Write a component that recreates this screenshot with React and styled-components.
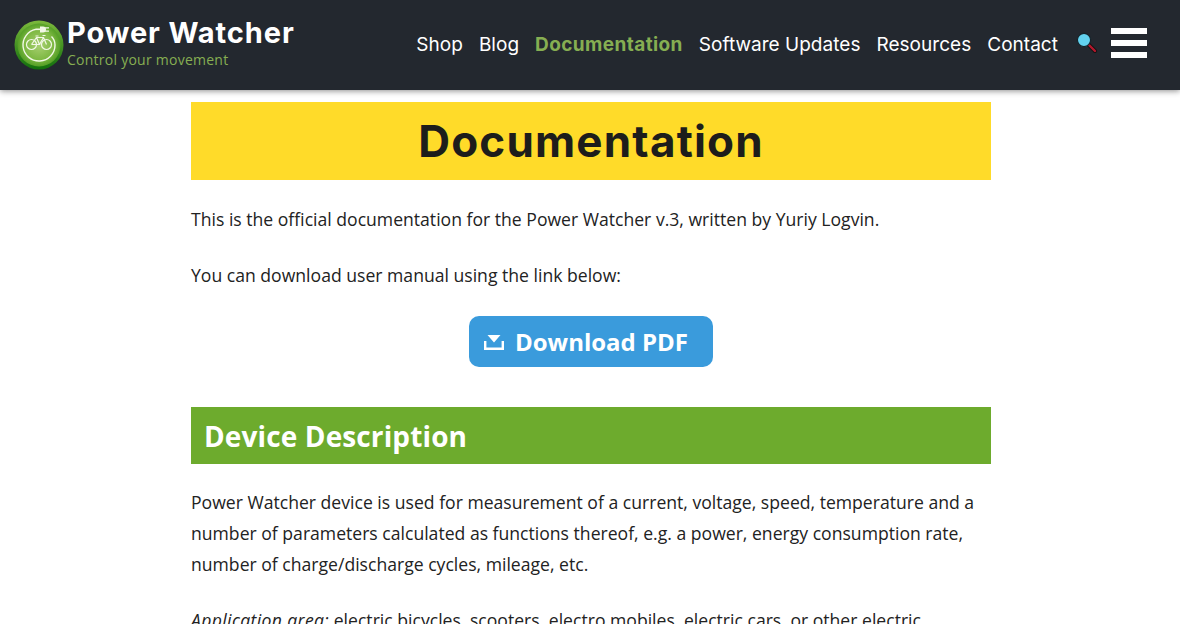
import React from 'react';
import styled, { createGlobalStyle } from 'styled-components';

const GlobalStyle = createGlobalStyle`
  html, body {
    margin: 0;
    padding: 0;
    height: 100%;
    overflow: hidden;
    background: #fff;
    color: #222;
    font-family: "Open Sans", "Liberation Sans", sans-serif;
  }
`;

const Header = styled.header`
  display: flex;
  align-items: center;
  justify-content: space-between;
  height: 90px;
  padding: 0 33px 0 14px;
  background: #23282f;
  box-shadow: 0 1px 6px rgba(0, 0, 0, 0.45);
  position: relative;
  z-index: 2;
`;

const Brand = styled.a`
  display: flex;
  align-items: center;
  gap: 3px;
`;

const BrandText = styled.div`
  display: flex;
  flex-direction: column;
  margin-top: -4px;
`;

const BrandName = styled.div`
  font-family: Inter, "Liberation Sans", sans-serif;
  font-weight: 700;
  font-size: 29px;
  line-height: 34px;
  letter-spacing: 0.9px;
  color: #fff;
`;

const BrandSlogan = styled.div`
  font-size: 14px;
  line-height: 20px;
  letter-spacing: 0.25px;
  color: #86ae52;
`;

const Nav = styled.nav`
  display: flex;
  align-items: center;
  margin-top: -4px;
`;

const NavLink = styled.a`
  font-family: Inter, "Liberation Sans", sans-serif;
  font-size: 19px;
  line-height: 26px;
  margin-right: 16px;
  margin-top: 4px;
  letter-spacing: ${({ $active }) => ($active ? '0.4px' : '0.03px')};
  font-weight: ${({ $active }) => ($active ? 700 : 400)};
  color: ${({ $active }) => ($active ? '#86ae52' : '#fff')};
`;

const SearchButton = styled.span`
  display: flex;
  margin: 0 13px 0 2px;
`;

const Burger = styled.span`
  display: flex;
  flex-direction: column;
  gap: 6px;
  width: 36px;
`;

const BurgerBar = styled.span`
  height: 6px;
  background: #fff;
`;

const Main = styled.main`
  width: 800px;
  margin: 12px auto 0 191px;
`;

const PageTitle = styled.h1`
  margin: 0;
  height: 78px;
  display: flex;
  align-items: center;
  justify-content: center;
  background: #ffdb29;
  color: #1d1d1b;
  font-family: Inter, "Liberation Sans", sans-serif;
  font-size: 44px;
  font-weight: 700;
  letter-spacing: 1.2px;
`;

const Paragraph = styled.p`
  margin: 0 0 25px;
  font-size: 17.6px;
  line-height: 31px;
  color: #222;
`;

const Emphasis = styled.em`
  letter-spacing: 0.37px;
`;

const Intro = styled.div`
  padding-top: 24px;
`;

const ButtonRow = styled.div`
  display: flex;
  justify-content: center;
  margin: 0 0 40px;
`;

const DownloadButton = styled.a`
  display: flex;
  align-items: center;
  gap: 11px;
  height: 51px;
  padding: 0 25px 0 15px;
  border-radius: 10px;
  background: #3a9bdc;
  color: #fff;
  font-size: 24px;
  font-weight: 700;
`;

const SectionTitle = styled.h2`
  margin: 0 0 23px;
  height: 57px;
  display: flex;
  align-items: center;
  padding-left: 13px;
  background: #6dab2d;
  color: #fff;
  font-size: 28px;
  font-weight: 700;
  letter-spacing: 0.12px;
`;

const Logo = () => (
  <svg width="50" height="50" viewBox="0 0 50 50">
    <defs>
      <linearGradient id="logoRim" x1="0" y1="0" x2="0" y2="1">
        <stop offset="0%" stopColor="#7cb93c" />
        <stop offset="100%" stopColor="#116f0c" />
      </linearGradient>
      <radialGradient id="logoFill" cx="50%" cy="50%" r="52%">
        <stop offset="0%" stopColor="#a9d072" />
        <stop offset="65%" stopColor="#7fb944" />
        <stop offset="100%" stopColor="#4f9c22" />
      </radialGradient>
    </defs>
    <circle cx="25" cy="25" r="24.5" fill="url(#logoRim)" />
    <circle cx="25" cy="25" r="21.5" fill="url(#logoFill)" />
    <path d="M22 9.3 A16 16 0 1 0 41 25 Q41 20 37.5 16.5" fill="none" stroke="#f2f8e6" strokeWidth="1.4" />
    <path d="M22 9.3 H26" stroke="#f2f8e6" strokeWidth="1.6" fill="none" />
    <path d="M26 6.5 h3 a3 3 0 0 1 3 3 a3 3 0 0 1 -3 3 h-3 z" fill="#f2f8e6" />
    <path d="M31 7.8 h4 M31 11.2 h4" stroke="#f2f8e6" strokeWidth="1.3" />
    <g fill="none" stroke="#f2f8e6" strokeWidth="1.2">
      <circle cx="17.5" cy="24.5" r="5" />
      <circle cx="32.5" cy="24.5" r="5" />
      <path d="M17.5 24.5 L22.5 17.5 H29.5 L32.5 24.5 M22.5 17.5 L25.5 24.5 H17.5 M25.5 24.5 L29.5 17.5 M21.5 16 H24.5 M28.5 15.5 H31.5" />
    </g>
  </svg>
);

const SearchIcon = () => (
  <svg width="22" height="22" viewBox="0 0 22 22">
    <path d="M12.5 12.5 L19 19" stroke="#111" strokeWidth="4" strokeLinecap="round" />
    <path d="M13 13 L19 19" stroke="#b3182d" strokeWidth="2.4" strokeLinecap="round" />
    <circle cx="8" cy="8" r="6.6" fill="#62d2ef" stroke="#15242b" strokeWidth="1.2" />
  </svg>
);

const DownloadIcon = () => (
  <svg width="20" height="16" viewBox="0 0 20 16" fill="#fff">
    <path d="M0 7 H2.4 V13.6 H17.6 V7 H20 V16 H0 Z" />
    <path d="M3.5 1 H16.5 L10 8.5 Z" />
  </svg>
);

const App = () => {
  return (
    <>
      <GlobalStyle />
      <Header>
        <Brand>
          <Logo />
          <BrandText>
            <BrandName>Power Watcher</BrandName>
            <BrandSlogan>Control your movement</BrandSlogan>
          </BrandText>
        </Brand>
        <Nav>
          <NavLink>Shop</NavLink>
          <NavLink>Blog</NavLink>
          <NavLink $active>Documentation</NavLink>
          <NavLink>Software Updates</NavLink>
          <NavLink>Resources</NavLink>
          <NavLink>Contact</NavLink>
          <SearchButton>
            <SearchIcon />
          </SearchButton>
          <Burger>
            <BurgerBar />
            <BurgerBar />
            <BurgerBar />
          </Burger>
        </Nav>
      </Header>
      <Main>
        <PageTitle>Documentation</PageTitle>
        <Intro>
          <Paragraph>This is the official documentation for the Power Watcher v.3, written by Yuriy Logvin.</Paragraph>
          <Paragraph>You can download user manual using the link below:</Paragraph>
        </Intro>
        <ButtonRow>
          <DownloadButton>
            <DownloadIcon />
            Download PDF
          </DownloadButton>
        </ButtonRow>
        <SectionTitle>Device Description</SectionTitle>
        <Paragraph>
          Power Watcher device is used for measurement of a current, voltage, speed, temperature and a number of
          parameters calculated as functions thereof, e.g. a power, energy consumption rate, number of charge/discharge
          cycles, mileage, etc.
        </Paragraph>
        <Paragraph>
          <Emphasis>Application area:</Emphasis> electric bicycles, scooters, electro mobiles, electric cars, or other
          electric vehicles.
        </Paragraph>
      </Main>
    </>
  );
};

export default App;
